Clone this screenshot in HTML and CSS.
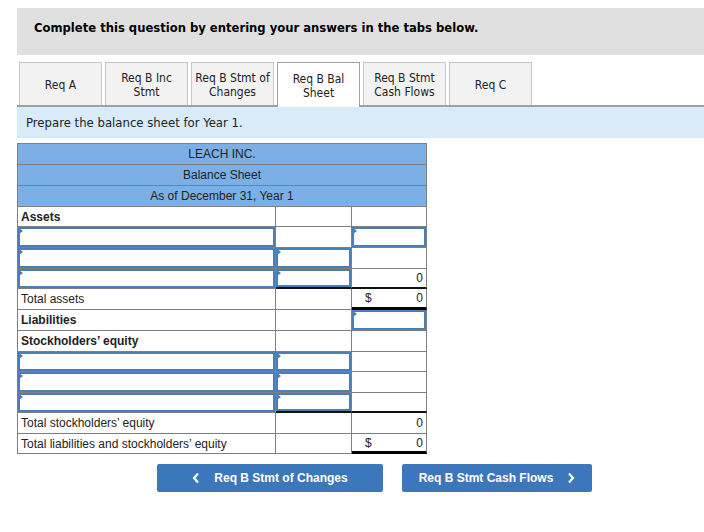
FILE: index.html
```html
<!DOCTYPE html>
<html>
<head>
<meta charset="utf-8">
<link rel="stylesheet" href="styles.css">
</head>
<body>
<div class="page">
  <div class="banner">Complete this question by entering your answers in the tabs below.</div>
  <div class="tabs">
    <div class="tab">Req A</div>
    <div class="tab">Req B Inc<br>Stmt</div>
    <div class="tab">Req B Stmt of<br>Changes</div>
    <div class="tab active">Req B Bal<br>Sheet</div>
    <div class="tab">Req B Stmt<br>Cash Flows</div>
    <div class="tab">Req C</div>
  </div>
  <div class="instr">Prepare the balance sheet for Year 1.</div>
  <div class="sheet">
    <div class="hrow">LEACH INC.</div>
    <div class="hrow">Balance Sheet</div>
    <div class="hrow">As of December 31, Year 1</div>

    <div class="row short"><div class="c bold">Assets</div><div class="c"></div><div class="c"></div></div>
    <div class="row"><div class="c inp"></div><div class="c"></div><div class="c inp"></div></div>
    <div class="row"><div class="c inp"></div><div class="c inp"></div><div class="c"></div></div>
    <div class="row short"><div class="c inp"></div><div class="c inp under"></div><div class="c num under">0</div></div>
    <div class="row"><div class="c">Total assets</div><div class="c">&nbsp;</div><div class="c num dbl"><span class="dol">$</span>0</div></div>
    <div class="row"><div class="c bold">Liabilities</div><div class="c"></div><div class="c inp"></div></div>
    <div class="row"><div class="c bold">Stockholders’ equity</div><div class="c"></div><div class="c"></div></div>
    <div class="row short"><div class="c inp"></div><div class="c inp"></div><div class="c"></div></div>
    <div class="row"><div class="c inp"></div><div class="c inp"></div><div class="c"></div></div>
    <div class="row short"><div class="c inp"></div><div class="c inp under"></div><div class="c under"></div></div>
    <div class="row"><div class="c">Total stockholders’ equity</div><div class="c">&nbsp;</div><div class="c num">0</div></div>
    <div class="row short"><div class="c">Total liabilities and stockholders’ equity</div><div class="c"></div><div class="c num dbl"><span class="dol">$</span>0</div></div>
  </div>
  <div class="nav">
    <div class="btn prev"><svg class="chev" width="8" height="12" viewBox="0 0 8 12"><polyline points="6,1.5 2,6 6,10.5" fill="none" stroke="#fff" stroke-width="2.2"/></svg>Req B Stmt of Changes</div>
    <div class="btn next">Req B Stmt Cash Flows<svg class="chev" width="8" height="12" viewBox="0 0 8 12"><polyline points="2,1.5 6,6 2,10.5" fill="none" stroke="#fff" stroke-width="2.2"/></svg></div>
  </div>
</div>
</body>
</html>
```
FILE: styles.css
```css
html, body {
  margin: 0;
  padding: 0;
  background: #fff;
}
.page {
  padding: 8px 0 0 17px;
  font-family: "DejaVu Sans Condensed", "DejaVu Sans", sans-serif;
}
.banner {
  height: 47px;
  background: #e0e0e0;
  display: flex;
  align-items: center;
  padding-left: 17px;
  padding-bottom: 9px;
  font-weight: bold;
  font-size: 12.9px;
  color: #000;
  box-sizing: border-box;
}
.tabs {
  display: flex;
  gap: 3px;
  margin-top: 7px;
  padding-left: 2px;
  height: 43px;
  position: relative;
  z-index: 1;
}
.tab {
  width: 83px;
  box-sizing: border-box;
  background: #f2f2f2;
  border: 1px solid #c6c6c6;
  border-bottom: none;
  display: flex;
  align-items: center;
  justify-content: center;
  text-align: center;
  font-size: 12px;
  line-height: 14px;
  color: #222;
  padding-top: 1px;
}
.tab.active {
  background: #fff;
  border-color: #a0a0a0;
  height: 45px;
}
.instr {
  height: 33px;
  background: #d9ebf9;
  border-top: 2px solid #a0a0a0;
  box-sizing: border-box;
  display: flex;
  align-items: center;
  padding-left: 9px;
  font-size: 13px;
  color: #222;
}
.sheet {
  margin-top: 5px;
  width: 410px;
  border-left: 1px solid #7f7f7f;
  border-top: 1px solid #7f7f7f;
  box-sizing: border-box;
  font-family: "Liberation Sans", Arial, sans-serif;
  font-size: 12px;
  color: #222;
}
.hrow {
  height: 21px;
  background: #7bafe5;
  border-right: 1px solid #7f7f7f;
  border-bottom: 1px solid #7f7f7f;
  box-sizing: border-box;
  display: flex;
  align-items: center;
  justify-content: center;
}
.row {
  display: grid;
  grid-template-columns: 258px 76px 75px;
  height: 21px;
}
.row.short { height: 20px; }
.c {
  border-right: 1px solid #7f7f7f;
  border-bottom: 1px solid #7f7f7f;
  box-sizing: border-box;
  display: flex;
  align-items: center;
  padding: 0 3px;
  white-space: nowrap;
  background-color: #fff;
}
.bold { font-weight: bold; }
.inp {
  position: relative;
  box-shadow: inset 0 0 0 2px #4b7db9;
}
.inp::before {
  content: "";
  position: absolute;
  left: 1px;
  top: 1px;
  border-left: 4px solid #4b7db9;
  border-top: 3px solid transparent;
  border-bottom: 3px solid transparent;
}
.num {
  justify-content: flex-end;
  padding-right: 3px;
}
.dol {
  margin-right: auto;
  padding-left: 10px;
}
.under {
  border-bottom: 2px solid #111;
}
.dbl {
  border-bottom: 3px solid #000;
}
.nav {
  display: flex;
  gap: 19px;
  padding-left: 140px;
  margin-top: 10px;
}
.btn {
  height: 28px;
  background: #3b77ba;
  border-radius: 2px;
  color: #fff;
  font-family: "Liberation Sans", Arial, sans-serif;
  font-weight: bold;
  font-size: 12px;
  display: flex;
  align-items: center;
  justify-content: center;
}
.btn.prev { width: 226px; }
.btn.next { width: 190px; }
.prev .chev { margin-right: 14px; }
.next .chev { margin-left: 14px; }
```
